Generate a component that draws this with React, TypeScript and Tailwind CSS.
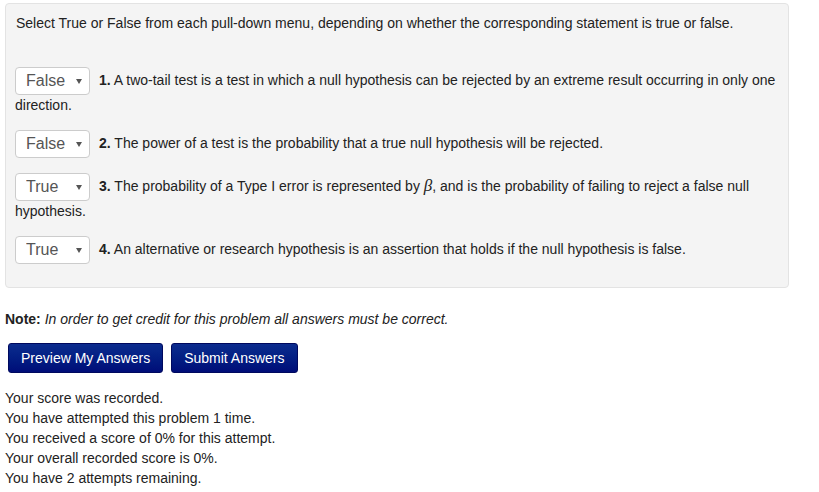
import React, { useState } from 'react';

type Answer = 'True' | 'False';

interface Statement {
  num: number;
  answer: Answer;
  text: React.ReactNode;
}

const statements: Statement[] = [
  {
    num: 1,
    answer: 'False',
    text: 'A two-tail test is a test in which a null hypothesis can be rejected by an extreme result occurring in only one direction.',
  },
  {
    num: 2,
    answer: 'False',
    text: 'The power of a test is the probability that a true null hypothesis will be rejected.',
  },
  {
    num: 3,
    answer: 'True',
    text: (
      <>
        The probability of a Type I error is represented by{' '}
        <span className="italic text-[17px] leading-none" style={{ fontFamily: '"Liberation Serif", "DejaVu Serif", serif' }}>
          β
        </span>
        , and is the probability of failing to reject a false null hypothesis.
      </>
    ),
  },
  {
    num: 4,
    answer: 'True',
    text: 'An alternative or research hypothesis is an assertion that holds if the null hypothesis is false.',
  },
];

const PullDown: React.FC<{ value: Answer; onChange: (v: Answer) => void }> = ({ value, onChange }) => (
  <span className="relative inline-block align-middle mr-[9px]">
    <select
      value={value}
      onChange={e => onChange(e.target.value as Answer)}
      className="appearance-none block w-[75px] h-[28px] pl-[10px] pr-[20px] bg-white border border-[#cccccc] rounded-[4px] text-[16px] text-[#555555] outline-none"
    >
      <option value="True">True</option>
      <option value="False">False</option>
    </select>
    <span className="pointer-events-none absolute right-[8px] top-[12px] w-0 h-0 border-l-[3px] border-r-[3px] border-t-[5px] border-l-transparent border-r-transparent border-t-[#555555]" />
  </span>
);

const StatementRow: React.FC<{ s: Statement }> = ({ s }) => {
  const [value, setValue] = useState<Answer>(s.answer);
  return (
    <p className="mb-[15px] leading-[20px]">
      <PullDown value={value} onChange={setValue} />
      <b>{s.num}.</b> {s.text}
    </p>
  );
};

const App: React.FC = () => {
  const scoreLines = [
    'Your score was recorded.',
    'You have attempted this problem 1 time.',
    'You received a score of 0% for this attempt.',
    'Your overall recorded score is 0%.',
    'You have 2 attempts remaining.',
  ];

  return (
    <div className="w-[819px] h-[492px] bg-white text-[14px] text-[#222222] px-[5px] pt-[3px]" style={{ fontFamily: '"Liberation Sans", Arial, sans-serif' }}>
      <div className="w-[784px] bg-[#f4f4f4] border border-[#e3e3e3] rounded-[4px] pl-[9px] pr-[10px] pt-[9px] pb-[8px]">
        <p className="leading-[20px] mb-[34px] ml-[1px]">
          Select True or False from each pull-down menu, depending on whether the corresponding statement is true or false.
        </p>
        {statements.map(s => (
          <StatementRow key={s.num} s={s} />
        ))}
      </div>

      <p className="mt-[21px] leading-[20px]">
        <b>Note:</b> <i>In order to get credit for this problem all answers must be correct.</i>
      </p>

      <div className="flex gap-[8px] mt-[14px] ml-[3px]">
        <button className="h-[30px] px-[12px] rounded-[3px] text-white text-[14px] bg-gradient-to-b from-[#0c2c8e] to-[#000c78] border border-[#00095e]">
          Preview My Answers
        </button>
        <button className="h-[30px] px-[12px] rounded-[3px] text-white text-[14px] bg-gradient-to-b from-[#0c2c8e] to-[#000c78] border border-[#00095e]">
          Submit Answers
        </button>
      </div>

      <div className="mt-[15px] leading-[20px] text-[14px]">
        {scoreLines.map(line => (
          <div key={line}>{line}</div>
        ))}
      </div>
    </div>
  );
};

export default App;
